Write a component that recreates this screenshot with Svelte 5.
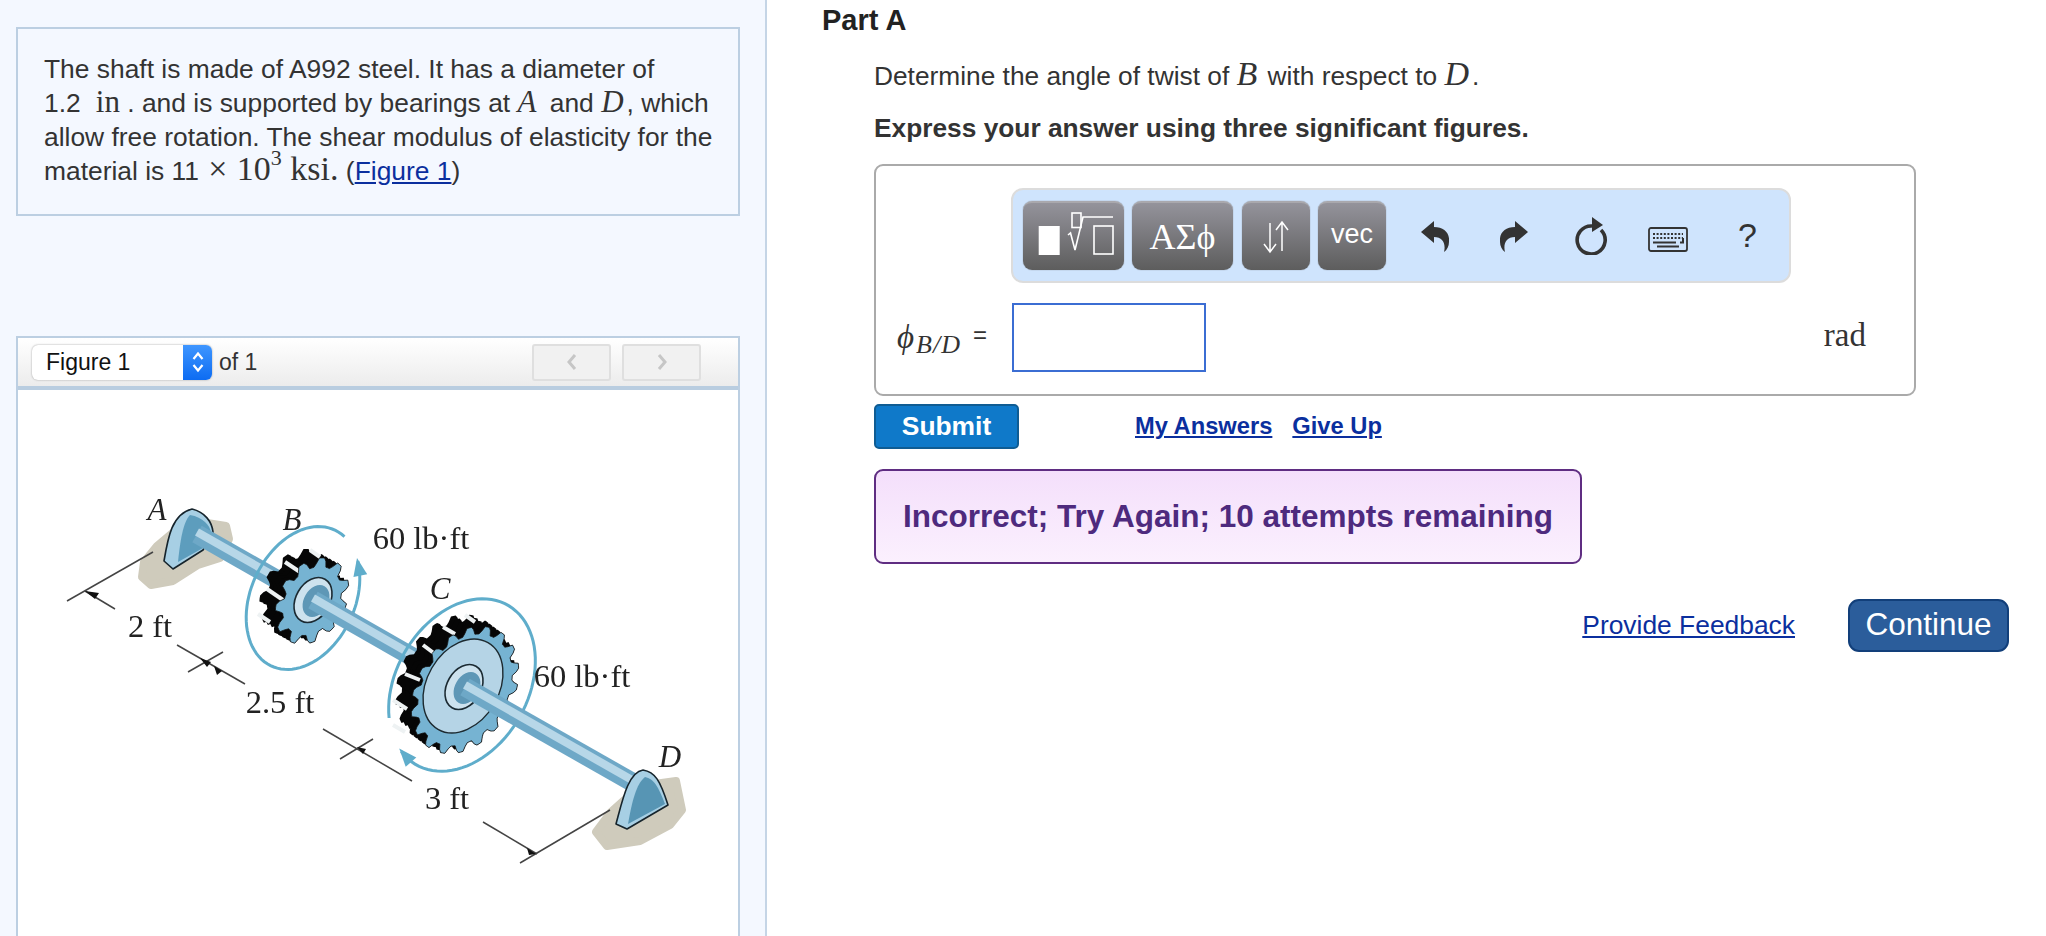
<script>
  function gear(cx, cy, a, b, rot, n, d, phase = 0) {
    const t = (rot * Math.PI) / 180;
    const pts = [];
    const steps = n * 8;
    for (let i = 0; i < steps; i++) {
      const th = (i / steps) * Math.PI * 2 + phase;
      const k = (i % 8) / 8;
      const r = k < 0.3 ? 1 : k < 0.5 ? 1 - (d * (k - 0.3)) / 0.2 : k < 0.8 ? 1 - d : 1 - (d * (1 - k)) / 0.2;
      const x = a * r * Math.cos(th);
      const y = b * r * Math.sin(th);
      pts.push(`${(cx + x * Math.cos(t) - y * Math.sin(t)).toFixed(1)} ${(cy + x * Math.sin(t) + y * Math.cos(t)).toFixed(1)}`);
    }
    return 'M' + pts.join('L') + 'Z';
  }
  function ept(e, deg) {
    const t = (deg * Math.PI) / 180, r = (e.rot * Math.PI) / 180;
    const x = e.a * Math.cos(t), y = e.b * Math.sin(t);
    return [e.cx + x * Math.cos(r) - y * Math.sin(r), e.cy + x * Math.sin(r) + y * Math.cos(r)];
  }
  function arc(e, from, to) {
    const p = [];
    for (let d = from; d <= to; d += 4) p.push(ept(e, d).map((v) => v.toFixed(1)).join(' '));
    return 'M' + p.join('L');
  }
  function head(e, deg, sign, len = 18, w = 7) {
    const tip = ept(e, deg), back = ept(e, deg - sign * 12);
    const dx = tip[0] - back[0], dy = tip[1] - back[1], m = Math.hypot(dx, dy);
    const ux = dx / m, uy = dy / m;
    const bx = tip[0] - ux * len, by = tip[1] - uy * len;
    return `M${tip[0]} ${tip[1]}L${bx - uy * w} ${by + ux * w}L${bx + uy * w} ${by - ux * w}Z`;
  }
  const ringB = { cx: 303, cy: 596, a: 75, b: 52, rot: -65 };
  const ringC = { cx: 462, cy: 683, a: 92, b: 66, rot: -60 };
  const stepsOf = [0, 0.25, 0.5, 0.75, 1];
  const blackB = stepsOf.map((s) => gear(296 + 16 * s, 590 + 9 * s, 46, 33, -60, 11, 0.2, 0.1));
  const blackC = stepsOf.map((s) => gear(449 + 16 * s, 676 + 12 * s, 68, 48, -60, 18, 0.12, 0.05));
  const stripes = [
    [267, 587, 283, 598], [258, 612, 270, 620], [285, 560, 300, 570], [310, 548, 320, 555],
    [423, 643, 435, 652], [405, 672, 420, 678], [393, 698, 407, 707], [393, 723, 405, 730],
    [443, 625, 455, 632], [465, 613, 475, 620]
  ];
  const shafts = [
    [197, 532, 313, 598], [313, 598, 465, 685], [465, 685, 632, 780]
  ];
  const dims = [
    [153, 550, 67, 599], [85, 589, 115, 607], [177, 643, 245, 682], [188, 670, 223, 650],
    [323, 727, 412, 779], [340, 757, 373, 737], [483, 820, 537, 852], [610, 808, 520, 861]
  ];
  const labels = [
    { x: 157, y: 518, t: 'A', c: 'it' }, { x: 292, y: 528, t: 'B', c: 'it' }, { x: 440, y: 597, t: 'C', c: 'it' },
    { x: 670, y: 765, t: 'D', c: 'it' }, { x: 150, y: 635, t: '2 ft', c: '' }, { x: 280, y: 711, t: '2.5 ft', c: '' },
    { x: 447, y: 807, t: '3 ft', c: '' }, { x: 421, y: 547, t: '60 lb·ft', c: '' }, { x: 582, y: 685, t: '60 lb·ft', c: '' }
  ];
</script>

<div class="page">
  <aside class="left">
    <div class="statement">
      <div class="ln">The shaft is made of A992 steel. It has a diameter of</div>
      <div class="ln">1.2 <span class="m">&nbsp;in</span> . and is supported by bearings at <i class="m v wide">A</i> and <i class="m v">D</i>, which</div>
      <div class="ln">allow free rotation. The shear modulus of elasticity for the</div>
      <div class="ln">material is 11 <span class="m big times">×</span> <span class="m big">10<sup>3</sup> ksi.</span> (<a href="#f">Figure 1</a>)</div>
    </div>
    <div class="figure">
      <div class="figbar">
        <div class="select">
          <span class="seltext">Figure 1</span>
          <span class="stepper">
            <svg width="14" height="24" viewBox="0 0 14 24" fill="none" stroke="#fff" stroke-width="2.2"><path d="M2.5 9 7 3.5 11.5 9M2.5 15 7 20.5 11.5 15" /></svg>
          </span>
        </div>
        <span class="of">of 1</span>
        <div class="navs">
          <span class="nav"><svg width="12" height="20" viewBox="0 0 12 20" fill="none" stroke="#c6c6c6" stroke-width="3"><path d="M9 3 3 10l6 7" /></svg></span>
          <span class="nav"><svg width="12" height="20" viewBox="0 0 12 20" fill="none" stroke="#c6c6c6" stroke-width="3"><path d="M3 3l6 7-6 7" /></svg></span>
        </div>
      </div>
      <svg class="diagram" viewBox="18 388 723 548" width="723" height="548">
        <path class="blob" d="M144 560 157 544 176 528 207 521 226 524 229 537 220 556 198 563 173 579 151 583 142 575Z" />
        <path class="blob" d="M596 830 611 810 640 784 676 779 682 808 670 823 640 839 607 844Z" />
        {#each dims as d}
          <line class="dim" x1={d[0]} y1={d[1]} x2={d[2]} y2={d[3]} />
        {/each}
        <path class="tip" d="M85 589 99 591 95 597Z M200 656 211 660 207 665 M214 664 222 669 217 673Z M357 745 366 747 363 752Z M527 846 536 852 529 853Z" />

        <path class="sup-side" d="M173 567 164 559C168 535 172 512 192 507 205 510 212 520 213 530L203 548Z" />
        <path class="sup-face" d="M190 513C203 515 210 524 211 530L203 546 178 560C180 540 183 520 190 513Z" />

        {#each [shafts[0]] as s}
          <line class="sh1" x1={s[0]} y1={s[1]} x2={s[2]} y2={s[3]} />
          <line class="sh2" x1={s[0]} y1={s[1] - 2} x2={s[2]} y2={s[3] - 2} />
        {/each}

        <path class="ring" d={arc(ringB, 41, 374)} />
        <path class="ringhead" d={head(ringB, 38, -1)} />
        {#each blackB as g}
          <path class="blk" d={g} />
        {/each}
        {#each stripes.slice(0, 4) as s}
          <line class="stripe" x1={s[0]} y1={s[1]} x2={s[2]} y2={s[3]} />
        {/each}
        <path class="facegear" d={gear(312, 599, 46, 33, -60, 11, 0.2, 0.1)} />
        <ellipse class="hub-out" cx="313" cy="598" rx="24" ry="17" transform="rotate(-60 313 598)" />
        <ellipse class="hub-in" cx="316" cy="599" rx="17" ry="12" transform="rotate(-60 316 599)" />

        {#each [shafts[1]] as s}
          <line class="sh1" x1={s[0]} y1={s[1]} x2={s[2]} y2={s[3]} />
          <line class="sh2" x1={s[0]} y1={s[1] - 2} x2={s[2]} y2={s[3] - 2} />
        {/each}

        <path class="ring" d={arc(ringC, 225, 558)} />
        <path class="ringhead" d={head(ringC, 200, 1)} />
        {#each blackC as g}
          <path class="blk" d={g} />
        {/each}
        {#each stripes.slice(4) as s}
          <line class="stripe" x1={s[0]} y1={s[1]} x2={s[2]} y2={s[3]} />
        {/each}
        <path class="facegear" d={gear(465, 688, 68, 48, -60, 18, 0.12, 0.05)} />
        <ellipse class="disk" cx="463" cy="684" rx="50" ry="36" transform="rotate(-60 463 684)" />
        <ellipse class="hub-out" cx="464" cy="685" rx="24" ry="17" transform="rotate(-60 464 685)" />
        <ellipse class="hub-in" cx="467" cy="686" rx="17" ry="12" transform="rotate(-60 467 686)" />

        {#each [shafts[2]] as s}
          <line class="sh1" x1={s[0]} y1={s[1]} x2={s[2]} y2={s[3]} />
          <line class="sh2" x1={s[0]} y1={s[1] - 2} x2={s[2]} y2={s[3] - 2} />
        {/each}

        <path class="sup-side" d="M627 827 616 822C622 800 628 770 643 768 655 770 660 778 668 803Z" />
        <path class="sup-dark" d="M645 775C654 777 658 784 665 802L628 822C632 800 636 782 645 775Z" />

        {#each labels as l}
          <text class="lbl {l.c}" x={l.x} y={l.y}>{l.t}</text>
        {/each}
      </svg>
    </div>
  </aside>

  <main class="right">
    <h2>Part A</h2>
    <div class="part">
      <p class="q">Determine the angle of twist of <i class="m v big">B</i> with respect to <i class="m v big">D</i>.</p>
      <p class="hint">Express your answer using three significant figures.</p>

      <div class="answer">
        <div class="tools">
          <button class="tb b1" aria-label="templates">
            <svg width="101" height="69" viewBox="0 0 101 69" fill="none" stroke="#fff" stroke-width="1.6">
              <rect x="15.7" y="24" width="21" height="29" fill="#fff" stroke="none" />
              <rect x="49" y="11" width="9" height="14.5" />
              <path d="M45 33 47.5 31 52 48 60 15H90" />
              <rect x="71" y="24" width="19" height="28" />
            </svg>
          </button>
          <button class="tb b2">ΑΣϕ</button>
          <button class="tb b3" aria-label="arrows">
            <svg width="30" height="34" viewBox="0 0 30 34" fill="none" stroke="#fff" stroke-width="1.5">
              <path d="M9 3V31M3 24 9 32 15 24" />
              <path d="M21 31V3M15 10 21 2 27 10" />
            </svg>
          </button>
          <button class="tb b4">vec</button>
          <span class="ic undo"><svg width="28" height="32" viewBox="0 0 28 32"><path d="M0 12 13 1V7C23 7 29 13 28 22 28 26 26 30 23 32 25 24 22 17 13 17V23Z" /></svg></span>
          <span class="ic redo"><svg width="28" height="32" viewBox="0 0 28 32"><path d="M28 12 15 1V7C5 7-1 13 0 22 0 26 2 30 5 32 3 24 6 17 15 17V23Z" /></svg></span>
          <span class="ic reset"><svg width="34" height="38" viewBox="0 0 34 38" fill="none"><path d="M18 9A14 14 0 1 0 27 13" stroke="#333" stroke-width="3.6" /><path d="M18 0 29 8 18 15Z" fill="#333" /></svg></span>
          <span class="ic kbd">
            <svg width="40" height="25" viewBox="0 0 40 25" fill="none">
              <rect x="1" y="1" width="38" height="23" rx="2" stroke="#333" stroke-width="1.8" />
              <path d="M5 7H35M5 11H35" stroke="#333" stroke-width="2" stroke-dasharray="2 1.6" />
              <path d="M5 15.5H28M32 15.5H35V11" stroke="#333" stroke-width="2" />
              <path d="M9 19.5H31" stroke="#333" stroke-width="2" />
            </svg>
          </span>
          <span class="help">?</span>
        </div>
        <div class="eq">
          <span class="lhs"><i class="phi">ϕ</i><sub>B/D</sub></span>
          <span class="equals">=</span>
          <input class="input" type="text" aria-label="answer" />
          <span class="unit">rad</span>
        </div>
      </div>

      <div class="actions">
        <button class="submit">Submit</button>
        <a href="#a" class="act first">My Answers</a>
        <a href="#g" class="act">Give Up</a>
      </div>

      <div class="alert">Incorrect; Try Again; 10 attempts remaining</div>
    </div>

    <div class="foot">
      <a href="#p" class="fb">Provide Feedback</a>
      <button class="cont">Continue</button>
    </div>
  </main>
</div>

<style>
  :global(body) { margin: 0; background: #fff; }
  .page { display: flex; height: 936px; overflow: hidden; font-family: "Liberation Sans", Arial, sans-serif; color: #333; }
  .left { width: 767px; flex: none; box-sizing: border-box; padding: 27px 0 0 16px; background: #f4f8ff; border-right: 2px solid #c5d5e6; display: flex; flex-direction: column; }
  .statement { width: 724px; height: 189px; flex: none; box-sizing: border-box; border: 2px solid #bccfe2; padding: 23px 26px 0; font-size: 26.4px; line-height: 34px; white-space: nowrap; }
  .ln { height: 34px; }
  .m { font-family: "Liberation Serif", "Times New Roman", serif; font-size: 31px; line-height: 0; }
  .m.big { font-size: 34px; }
  .v { margin: 0 3px 0 0; }
  .wide { margin-right: 6px; }
  .times { margin: 0 2px; }
  sup { font-size: 22px; line-height: 0; vertical-align: 15px; }
  a { color: #0b2f9e; }
  .figure { width: 724px; margin-top: 120px; flex: 1; min-height: 0; box-sizing: border-box; border: 2px solid #bccfe2; border-bottom: 0; background: #fff; display: flex; flex-direction: column; }
  .figbar { height: 48px; flex: none; box-sizing: content-box; border-bottom: 4px solid #b9cde0; background: linear-gradient(#fff, #ececec); display: flex; align-items: center; padding-left: 14px; }
  .select { width: 180px; height: 35px; display: flex; background: #fff; border-radius: 6px; box-shadow: 0 0 2px #999; font-size: 23px; color: #111; }
  .seltext { flex: 1; padding-left: 14px; line-height: 35px; }
  .stepper { width: 29px; background: linear-gradient(#3f96ff, #0d6cf2); border-radius: 0 6px 6px 0; display: flex; align-items: center; justify-content: center; }
  .of { margin-left: 7px; font-size: 23px; }
  .navs { margin-left: auto; margin-right: 37px; display: flex; gap: 11px; }
  .nav { width: 79px; height: 37px; box-sizing: border-box; border: 2px solid #dfdfdf; border-radius: 3px; background: #f1f1f1; display: flex; align-items: center; justify-content: center; }
  .diagram { display: block; filter: blur(0.6px); flex: none; }
  .blob { fill: #cfcbbc; stroke: #cfcbbc; stroke-width: 8; stroke-linejoin: round; }
  .dim { stroke: #444; stroke-width: 1.5; }
  .tip { fill: #111; }
  .sup-side { fill: #a7cfe4; stroke: #16242c; stroke-width: 1.6; stroke-linejoin: round; }
  .sup-face { fill: #5d9dbd; }
  .sup-dark { fill: #5795b4; }
  .sh1 { stroke: #6ea8c7; stroke-width: 19; }
  .sh2 { stroke: #b7d7e8; stroke-width: 8; }
  .ring { fill: none; stroke: #5fadcb; stroke-width: 3; }
  .ringhead { fill: #5fadcb; }
  .blk { fill: #060606; }
  .facegear { fill: #76b3d2; stroke: #111; stroke-width: 0.8; }
  .stripe { stroke: #eef2f3; stroke-width: 4; }
  .disk { fill: #b5d4e6; stroke: #1d2a30; stroke-width: 1.4; }
  .hub-out { fill: #cde2ee; stroke: #1b2a32; stroke-width: 1.6; }
  .hub-in { fill: #5e97b6; }
  .lbl { font-family: "Liberation Serif", serif; font-size: 32.5px; fill: #222; text-anchor: middle; }
  .lbl.it { font-style: italic; font-size: 31px; }

  .right { flex: 1; min-width: 0; padding: 2px 37px 0 55px; }
  h2 { margin: 0; font-size: 29px; line-height: 36px; color: #222; }
  .part { margin-left: 52px; width: 1042px; }
  p { margin: 0; font-size: 26.3px; }
  .q { margin-top: 19px; line-height: 38px; }
  .hint { margin-top: 15px; line-height: 36px; font-weight: bold; }
  .answer { margin-top: 18px; height: 232px; box-sizing: border-box; border: 2px solid #aaa; border-radius: 9px; padding-top: 22px; }
  .tools { margin-left: 135px; width: 780px; height: 95px; box-sizing: border-box; border: 2px solid #dcdcdc; background: #cfe4fd; border-radius: 12px; display: flex; align-items: center; padding-left: 10px; }
  .tb { height: 69px; border: 0; border-top: 2px solid #a9a8ad; border-radius: 9px; background: linear-gradient(#94939b, #5d5d5d); color: #fff; padding: 0; margin: 0 8px 0 0; box-shadow: 0 0 1px #666; display: flex; align-items: center; justify-content: center; }
  .b1 { width: 101px; }
  .b2 { width: 101px; font: 36px "Liberation Serif", serif; }
  .b3 { width: 68px; margin-left: 1px; }
  .b4 { width: 68px; font: 27px "Liberation Sans", sans-serif; padding-bottom: 4px; }
  .ic { display: flex; align-items: center; justify-content: center; fill: #333; }
  .undo { margin-left: 27px; }
  .redo { margin-left: 51px; }
  .reset { margin-left: 46px; }
  .kbd { margin-left: 40px; margin-top: 8px; }
  .help { margin-left: 50px; font-size: 34px; color: #333; }
  .eq { margin-top: 20px; display: flex; align-items: center; height: 69px; }
  .lhs { margin-left: 21px; font-family: "Liberation Serif", serif; font-size: 33px; font-style: italic; width: 62px; white-space: nowrap; }
  .phi { font-size: 33px; }
  sub { font-size: 26px; vertical-align: -5px; line-height: 0; letter-spacing: 1px; margin-left: 2px; }
  .equals { margin-left: 14px; font-size: 24px; width: 39px; align-self: center; padding-bottom: 6px; }
  .input { width: 194px; height: 69px; box-sizing: border-box; border: 2px solid #3b6dd3; background: #fff; padding: 0; margin: 0; outline: 0; }
  .unit { margin-left: auto; margin-right: 48px; font: 33px "Liberation Serif", serif; position: relative; top: -2px; }
  .actions { margin-top: 8px; height: 45px; display: flex; align-items: center; }
  .submit { width: 145px; height: 45px; box-sizing: border-box; border: 2px solid #0f5c93; border-radius: 5px; background: #0f79c9; color: #fff; font: bold 26.4px "Liberation Sans", sans-serif; padding: 0; }
  .act { font-size: 23.7px; font-weight: bold; }
  .first { margin-left: 116px; margin-right: 20px; }
  .alert { margin-top: 20px; width: 708px; height: 95px; box-sizing: border-box; border: 2px solid #5f2d82; border-radius: 9px; background: linear-gradient(#f4dffb, #fbf0fe); color: #4e2a7e; font-size: 31.5px; font-weight: bold; line-height: 91px; padding-left: 27px; white-space: nowrap; }
  .foot { margin-top: 35px; display: flex; align-items: center; justify-content: flex-end; }
  .fb { font-size: 26.4px; margin-right: 53px; }
  .cont { width: 161px; height: 53px; box-sizing: border-box; border: 2px solid #123f7a; border-radius: 11px; background: #2b5d9b; color: #fff; font: 31.5px "Liberation Sans", sans-serif; padding: 0 0 3px; }
</style>
